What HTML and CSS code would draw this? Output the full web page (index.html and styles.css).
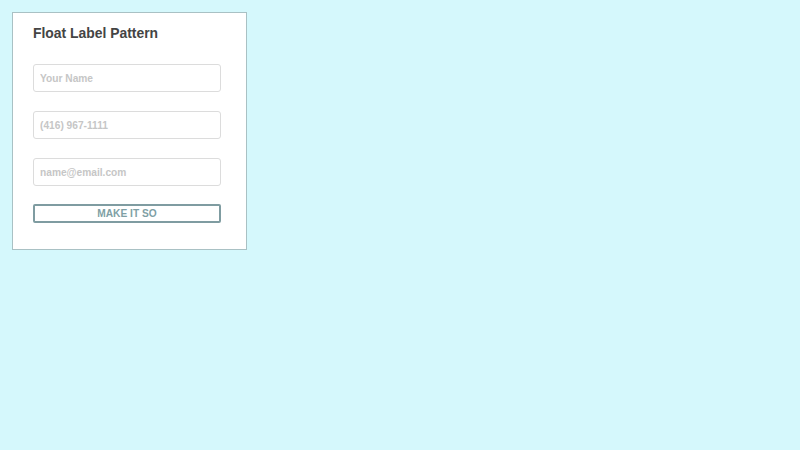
FILE: index.html
```html
<!DOCTYPE html>
<html>
<head>
<meta charset="utf-8">
<link rel="stylesheet" href="styles.css">
</head>
<body>
<form class="card">
  <h1 class="title">Float Label Pattern</h1>
  <input class="field" type="text" placeholder="Your Name">
  <input class="field" type="text" placeholder="(416) 967-1111">
  <input class="field" type="text" placeholder="name@email.com">
  <button class="btn" type="button">MAKE IT SO</button>
</form>
</body>
</html>
```
FILE: styles.css
```css
html, body {
  margin: 0;
  height: 100%;
  background: #d5f8fc;
}
body {
  padding: 12px;
  box-sizing: border-box;
  font-family: "Liberation Sans", Arial, sans-serif;
}
.card {
  width: 235px;
  box-sizing: border-box;
  background: #fff;
  border: 1px solid #a9c1c4;
  padding: 11px 25px 26px 20px;
  display: flex;
  flex-direction: column;
}
.title {
  margin: 0 0 22px 0;
  font-size: 13.9px;
  line-height: 18px;
  font-weight: bold;
  color: #444;
}
.field {
  width: 188px;
  height: 28px;
  box-sizing: border-box;
  margin: 0 0 19px 0;
  border: 1px solid #dcdcdc;
  border-radius: 3px;
  padding: 0 6px;
  font-family: "Liberation Sans", Arial, sans-serif;
  font-size: 10.2px;
  font-weight: bold;
  color: #555;
  outline: none;
}
.field:last-of-type {
  margin-bottom: 18px;
}
.field::placeholder {
  color: #c6c6c6;
}
.btn {
  width: 188px;
  height: 19px;
  box-sizing: border-box;
  margin: 0;
  padding: 0;
  background: #fff;
  border: 2px solid #7f9ca1;
  border-radius: 2px;
  font-family: "Liberation Sans", Arial, sans-serif;
  font-size: 10.2px;
  font-weight: bold;
  color: #7f9fa5;
  line-height: 15px;
}
```
